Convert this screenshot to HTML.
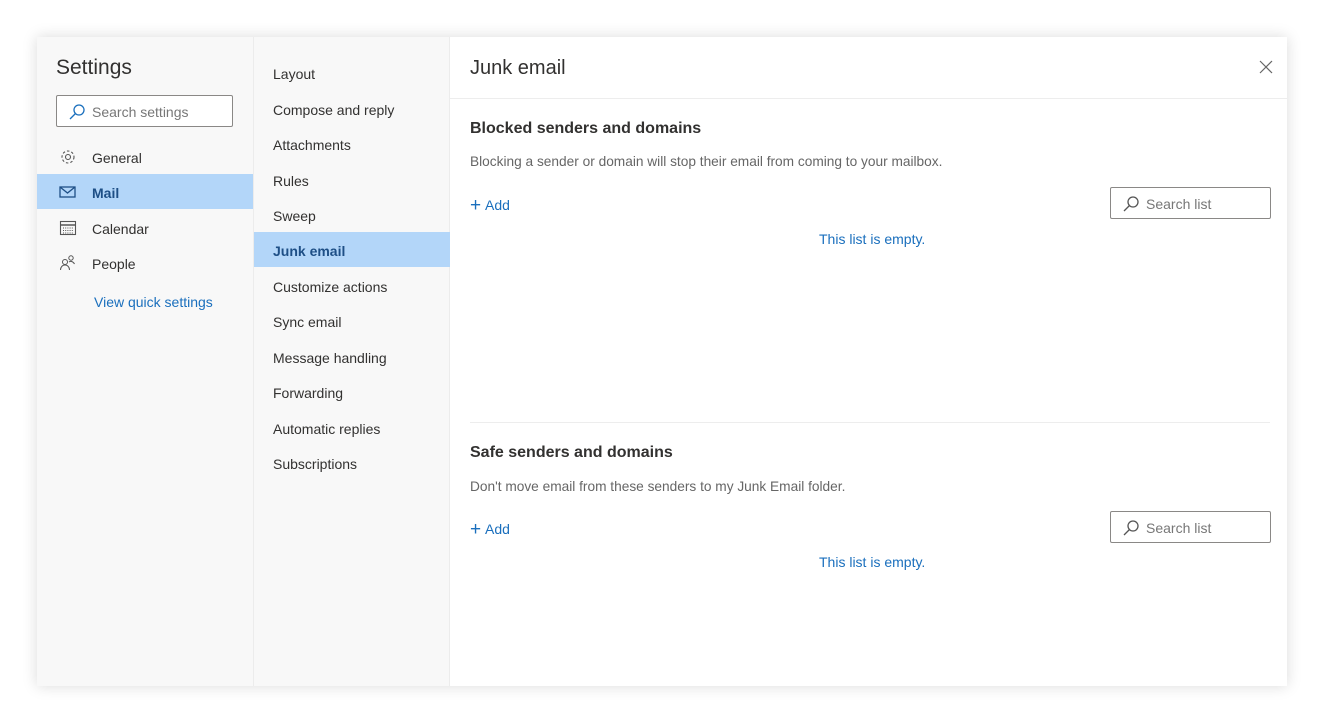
<!DOCTYPE html>
<html><head><meta charset="utf-8"><style>
*{box-sizing:border-box;margin:0;padding:0}
body{width:1328px;height:727px;background:#fff;font-family:"Liberation Sans",sans-serif;position:relative;overflow:hidden;color:#323130}
.panel{position:absolute;left:37px;top:37px;width:1250px;height:649px;background:#fff;box-shadow:0 0 14px rgba(0,0,0,.15);overflow:hidden}
.c1{position:absolute;left:0;top:0;width:216px;height:649px;background:#f8f8f8}
.c2{position:absolute;left:216px;top:0;width:197px;height:649px;background:#f8f8f8;border-left:1px solid #ececec;border-right:1px solid #ececec}
.abs{position:absolute;white-space:nowrap}
h1{position:absolute;left:19px;top:19px;font-size:21px;font-weight:normal;color:#323130}
.search{position:absolute;left:19px;top:58px;width:177px;height:32px;border:1px solid #8a8886;border-radius:2px;background:#fff}
.search span{position:absolute;left:35px;top:8px;font-size:14px;color:#777}
.nav{position:absolute;left:0;width:216px;height:35px;font-size:14px}
.nav span{position:absolute;left:55px;top:11px}
.sel{background:#b3d6f9;color:#1e4f86;font-weight:bold}
.sub{position:absolute;left:0;width:196px;height:35px;font-size:14px}
.sub span{position:absolute;left:19px;top:11px}
.blue{color:#1a6fbd}
.sl{position:absolute;width:161px;height:32px;border:1px solid #8a8886;border-radius:2px;background:#fff}
.sl span{position:absolute;left:35px;top:8px;font-size:14px;color:#777}
</style></head><body>
<div class="panel">
 <div class="c1">
  <h1>Settings</h1>
  <div class="search"><svg style="position:absolute;left:11px;top:7px" width="18" height="18" viewBox="0 0 18 18"><circle cx="11" cy="7" r="5" fill="none" stroke="#1a6fbd" stroke-width="1.3"/><path d="M7.5 10.5 2 16" stroke="#1a6fbd" stroke-width="1.3"/></svg><span>Search settings</span></div>
  <div class="nav" style="top:102px"><svg style="position:absolute;left:22px;top:9px" width="18" height="18" viewBox="0 0 18 18"><circle cx="9" cy="9" r="2.5" fill="none" stroke="#555" stroke-width="1.1"/><circle cx="9" cy="9" r="6" fill="none" stroke="#555" stroke-width="1.1" stroke-dasharray="2.5 2"/></svg><span>General</span></div>
  <div class="nav sel" style="top:137px"><svg style="position:absolute;left:22px;top:11px" width="18" height="14" viewBox="0 0 18 14"><rect x="1" y="2" width="15" height="10" fill="none" stroke="#1e4f86" stroke-width="1.3"/><path d="M1 2l7.5 6L16 2" fill="none" stroke="#1e4f86" stroke-width="1.3"/></svg><span>Mail</span></div>
  <div class="nav" style="top:173px"><svg style="position:absolute;left:22px;top:9px" width="18" height="18" viewBox="0 0 18 18"><rect x="1.5" y="2.5" width="15" height="13" fill="none" stroke="#555" stroke-width="1.1"/><path d="M1.5 6h15" stroke="#555" stroke-width="1.5"/><path d="M4 9h10M4 11.5h10M4 14h10" stroke="#555" stroke-dasharray="1 1.2"/></svg><span>Calendar</span></div>
  <div class="nav" style="top:208px"><svg style="position:absolute;left:22px;top:9px" width="18" height="18" viewBox="0 0 18 18"><circle cx="6" cy="8" r="2.5" fill="none" stroke="#555"/><path d="M1.5 16c0-3 2-5 4.5-5s4.5 2 4.5 5" fill="none" stroke="#555"/><circle cx="12" cy="4" r="2.2" fill="none" stroke="#555"/><path d="M10 8c1-1 4-1 5.5 2" fill="none" stroke="#555"/></svg><span>People</span></div>
  <div class="abs blue" style="left:57px;top:257px;font-size:14px">View quick settings</div>
 </div>
 <div class="c2">
  <div class="sub" style="top:18px"><span>Layout</span></div>
  <div class="sub" style="top:54px"><span>Compose and reply</span></div>
  <div class="sub" style="top:89px"><span>Attachments</span></div>
  <div class="sub" style="top:125px"><span>Rules</span></div>
  <div class="sub" style="top:160px"><span>Sweep</span></div>
  <div class="sub sel" style="top:195px"><span>Junk email</span></div>
  <div class="sub" style="top:231px"><span>Customize actions</span></div>
  <div class="sub" style="top:266px"><span>Sync email</span></div>
  <div class="sub" style="top:302px"><span>Message handling</span></div>
  <div class="sub" style="top:337px"><span>Forwarding</span></div>
  <div class="sub" style="top:373px"><span>Automatic replies</span></div>
  <div class="sub" style="top:408px"><span>Subscriptions</span></div>
 </div>
 <div class="abs" style="left:433px;top:20px;font-size:20px">Junk email</div>
 <svg style="position:absolute;left:1222px;top:23px" width="14" height="14" viewBox="0 0 14 14"><path d="M1 1l12 12M13 1L1 13" stroke="#666" stroke-width="1.2"/></svg>
 <div style="position:absolute;left:413px;top:61px;width:837px;height:1px;background:#ededed"></div>
 <div class="abs" style="left:433px;top:83px;font-size:16px;font-weight:bold">Blocked senders and domains</div>
 <div class="abs" style="left:433px;top:117px;font-size:13.7px;color:#666">Blocking a sender or domain will stop their email from coming to your mailbox.</div>
 <div class="abs blue" style="left:433px;top:157px;font-size:14px"><span style="font-size:19px;position:relative;top:1px">+</span>&nbsp;Add</div>
 <div class="sl" style="left:1073px;top:150px"><svg style="position:absolute;left:11px;top:7px" width="18" height="18" viewBox="0 0 18 18"><circle cx="11" cy="7" r="5" fill="none" stroke="#555" stroke-width="1.3"/><path d="M7.5 10.5 2 16" stroke="#555" stroke-width="1.3"/></svg><span>Search list</span></div>
 <div class="abs blue" style="left:782px;top:194px;font-size:14px">This list is empty.</div>
 <div style="position:absolute;left:433px;top:385px;width:800px;height:1px;background:#ededed"></div>
 <div class="abs" style="left:433px;top:407px;font-size:16px;font-weight:bold">Safe senders and domains</div>
 <div class="abs" style="left:433px;top:442px;font-size:13.7px;color:#666">Don't move email from these senders to my Junk Email folder.</div>
 <div class="abs blue" style="left:433px;top:481px;font-size:14px"><span style="font-size:19px;position:relative;top:1px">+</span>&nbsp;Add</div>
 <div class="sl" style="left:1073px;top:474px"><svg style="position:absolute;left:11px;top:7px" width="18" height="18" viewBox="0 0 18 18"><circle cx="11" cy="7" r="5" fill="none" stroke="#555" stroke-width="1.3"/><path d="M7.5 10.5 2 16" stroke="#555" stroke-width="1.3"/></svg><span>Search list</span></div>
 <div class="abs blue" style="left:782px;top:517px;font-size:14px">This list is empty.</div>
</div>
</body></html>
